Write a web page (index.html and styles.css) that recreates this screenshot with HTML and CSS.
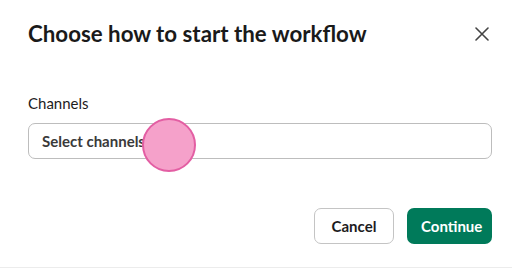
FILE: index.html
```html
<!DOCTYPE html>
<html>
<head>
<meta charset="utf-8">
<link rel="stylesheet" href="styles.css">
</head>
<body>
<div class="modal">
  <div class="header">
    <h1 class="title">Choose how to start the workflow</h1>
    <button class="close" aria-label="Close">
      <svg width="14" height="14" viewBox="0 0 14 14"><path d="M1 1 L13 13 M13 1 L1 13" stroke="#444" stroke-width="1.6" stroke-linecap="round" fill="none"/></svg>
    </button>
  </div>
  <div class="body">
    <label class="label">Channels</label>
    <div class="field">
      <div class="input">Select channels</div>
      <div class="touch"></div>
    </div>
  </div>
  <div class="footer">
    <button class="btn cancel">Cancel</button>
    <button class="btn primary">Continue</button>
  </div>
</div>
</body>
</html>
```
FILE: styles.css
```css
html, body {
  margin: 0;
  padding: 0;
  background: #fff;
}
body {
  font-family: Lato, "Liberation Sans", sans-serif;
  color: #1d1c1d;
}
.modal {
  width: 512px;
  height: 268px;
  box-sizing: border-box;
  padding: 0 20px 0 28px;
  display: flex;
  flex-direction: column;
  border-bottom: 1px solid #ececec;
}
.header {
  display: flex;
  align-items: center;
  justify-content: space-between;
  height: 68px;
}
.title {
  margin: 0;
  margin-top: -2px;
  font-size: 22.3px;
  font-weight: 700;
  letter-spacing: 0;
  color: #1a1a1a;
}
.close {
  border: 0;
  background: none;
  padding: 0;
  margin-right: 2px;
  width: 16px;
  height: 16px;
  display: flex;
  align-items: center;
  justify-content: center;
}
.body {
  padding-top: 25px;
  display: flex;
  flex-direction: column;
}
.label {
  font-size: 15px;
  font-weight: 400;
  color: #1d1c1d;
  line-height: 20px;
  margin-bottom: 10px;
}
.field {
  position: relative;
}
.input {
  height: 36px;
  box-sizing: border-box;
  border: 1px solid #bdbdbd;
  border-radius: 7px;
  padding: 0 13px;
  display: flex;
  align-items: center;
  font-size: 15px;
  font-weight: 700;
  color: #3a3a3a;
}
.touch {
  position: absolute;
  left: 114px;
  top: -5px;
  width: 50px;
  height: 50px;
  border-radius: 50%;
  background: #f5a1ca;
  border: 2px solid #e35ea3;
}
.footer {
  margin-top: 49px;
  display: flex;
  justify-content: flex-end;
  gap: 13px;
}
.btn {
  height: 36px;
  box-sizing: border-box;
  border-radius: 7px;
  font-family: Lato, "Liberation Sans", sans-serif;
  font-size: 15px;
  font-weight: 700;
  padding: 0 14px;
}
.cancel {
  background: #fff;
  border: 1px solid #c4c4c4;
  color: #1d1c1d;
  width: 80px;
}
.primary {
  background: #007a5a;
  border: 0;
  color: #fff;
  width: 85px;
}
```
